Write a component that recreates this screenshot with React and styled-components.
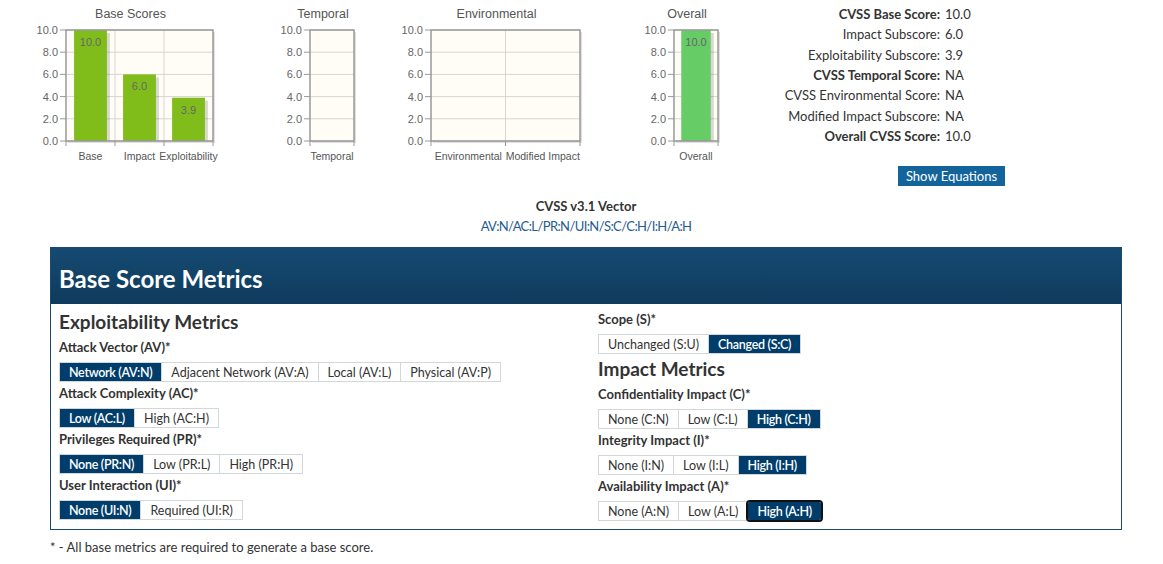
import React from "react";
import styled, { createGlobalStyle } from "styled-components";

const GlobalStyle = createGlobalStyle`
  body {
    margin: 0;
    background: #fff;
    color: #333;
    font-family: "Lato", "Liberation Sans", sans-serif;
    font-size: 13px;
  }
`;

const Page = styled.div`
  width: 1163px;
`;

const TopRow = styled.div`
  display: flex;
  padding-left: 30px;
  height: 196px;
`;

const ChartCell = styled.div`
  width: ${(p) => p.$w}px;
  flex: none;
`;

const ScoreBox = styled.div`
  width: 260px;
  padding-top: 4px;
`;

const ScoreGrid = styled.div`
  display: grid;
  grid-template-columns: 180px auto;
  column-gap: 5px;
  line-height: 20.33px;
`;

const ScoreLabel = styled.div`
  text-align: right;
  font-weight: ${(p) => (p.$bold ? 700 : 400)};
`;

const ShowButton = styled.button`
  margin: 20px 0 0 138px;
  width: 107px;
  height: 20px;
  padding: 0;
  border: none;
  background: #14649c;
  color: #fff;
  font-family: inherit;
  font-size: 13px;
`;

const VectorBlock = styled.div`
  margin-left: 50px;
  width: 1072px;
  text-align: center;
  line-height: 20px;
`;

const VectorTitle = styled.div`
  font-weight: 700;
`;

const VectorLink = styled.a`
  color: #1f5b8f;
  text-decoration: none;
  letter-spacing: -0.6px;
`;

const Panel = styled.section`
  margin: 11px 0 0 50px;
  width: 1072px;
  box-sizing: border-box;
  border: 1px solid #1b4a6e;
`;

const PanelHeader = styled.div`
  height: 56px;
  display: flex;
  align-items: center;
  padding-left: 8px;
  background: linear-gradient(#164a72, #0e3b5d);
`;

const PanelTitle = styled.h2`
  margin: 0;
  padding-top: 5px;
  color: #fff;
  font-size: 24px;
  font-weight: 700;
`;

const PanelBody = styled.div`
  display: grid;
  grid-template-columns: 539px 1fr;
  padding: 5px 8px 7px;
`;

const Column = styled.div`
  display: flex;
  flex-direction: column;
`;

const GroupTitle = styled.h3`
  margin: ${(p) => (p.$first ? "1px" : "2px")} 0 3px;
  font-size: 19px;
  line-height: 24px;
  font-weight: 700;
`;

const MetricLabel = styled.div`
  font-weight: 700;
  line-height: 20px;
  margin-bottom: 5px;
`;

const ButtonRow = styled.div`
  display: flex;
  margin-bottom: 1px;
`;

const OptionButton = styled.button`
  height: 20px;
  padding: 0 9px;
  margin-left: -1px;
  border: 1px solid #d2d7da;
  background: ${(p) => (p.$on ? "#003d6a" : "#fff")};
  color: ${(p) => (p.$on ? "#fff" : "#333")};
  font-family: inherit;
  font-size: 12.5px;
  font-weight: ${(p) => (p.$on ? 600 : 400)};
  letter-spacing: ${(p) => (p.$on ? "-0.3px" : "0")};
  white-space: nowrap;
  outline: ${(p) => (p.$focus ? "2px solid #111" : "none")};
  outline-offset: -1px;
  border-radius: ${(p) => (p.$focus ? "3px" : "0")};

  &:first-child {
    margin-left: 0;
  }
`;

const Footnote = styled.p`
  margin: 7px 0 0 50px;
  line-height: 20px;
`;

const TOP = 30;
const PLOT_H = 111;
const LEFT = 36;

// jqplot-like bar chart: fixed 0-10 scale, one column per category
function Chart({ title, plotW, cats, values = [], color }) {
  const w = LEFT + plotW + 14;
  const catW = plotW / cats.length;
  const barW = catW * 0.67;
  const y = (v) => TOP + PLOT_H * (1 - v / 10);
  const ticks = [0, 2, 4, 6, 8, 10];
  return (
    <svg width={w} height={170} fontFamily="'Liberation Sans', sans-serif">
      <text x={w / 2 + 2} y={18} fontSize="12.5" fill="#555" textAnchor="middle">
        {title}
      </text>
      <rect x={LEFT + 2} y={TOP + 2} width={plotW} height={PLOT_H} fill="#000" opacity="0.12" />
      <rect x={LEFT} y={TOP} width={plotW} height={PLOT_H} fill="#fffdf6" />
      {ticks.map((t) => (
        <g key={t}>
          <line x1={LEFT} x2={LEFT + plotW} y1={y(t)} y2={y(t)} stroke="#d6d6d6" />
          <line x1={LEFT - 6} x2={LEFT} y1={y(t)} y2={y(t)} stroke="#999" />
          <text x={LEFT - 8} y={y(t) + 4} fontSize="11" fill="#666" textAnchor="end">
            {t.toFixed(1)}
          </text>
        </g>
      ))}
      {cats.map((c, i) => (
        <g key={c}>
          {i > 0 && (
            <line x1={LEFT + catW * i} x2={LEFT + catW * i} y1={TOP} y2={TOP + PLOT_H} stroke="#d6d6d6" />
          )}
          <line x1={LEFT + catW * i} x2={LEFT + catW * i} y1={TOP + PLOT_H} y2={TOP + PLOT_H + 5} stroke="#999" />
          <text x={LEFT + catW * (i + 0.5)} y={TOP + PLOT_H + 19} fontSize="10.5" fill="#555" textAnchor="middle">
            {c}
          </text>
        </g>
      ))}
      <line x1={LEFT + plotW} x2={LEFT + plotW} y1={TOP + PLOT_H} y2={TOP + PLOT_H + 5} stroke="#999" />
      {values.map((v, i) => {
        const bx = LEFT + catW * (i + 0.5) - barW / 2;
        return (
          <g key={i}>
            <rect x={bx + 3} y={y(v) + 3} width={barW} height={TOP + PLOT_H - y(v) - 3} fill="#000" opacity="0.15" />
            <rect x={bx} y={y(v)} width={barW} height={TOP + PLOT_H - y(v)} fill={color} />
            <text x={bx + barW / 2} y={y(v) + 16} fontSize="11" fill="#666" textAnchor="middle">
              {v.toFixed(1)}
            </text>
          </g>
        );
      })}
      <rect x={LEFT} y={TOP} width={plotW} height={PLOT_H} fill="none" stroke="#999" strokeWidth="1.5" />
    </svg>
  );
}

const scores = [
  ["CVSS Base Score:", "10.0", true],
  ["Impact Subscore:", "6.0"],
  ["Exploitability Subscore:", "3.9"],
  ["CVSS Temporal Score:", "NA", true],
  ["CVSS Environmental Score:", "NA"],
  ["Modified Impact Subscore:", "NA"],
  ["Overall CVSS Score:", "10.0", true],
];

const leftMetrics = [
  ["Attack Vector (AV)*", ["Network (AV:N)", "Adjacent Network (AV:A)", "Local (AV:L)", "Physical (AV:P)"], 0],
  ["Attack Complexity (AC)*", ["Low (AC:L)", "High (AC:H)"], 0],
  ["Privileges Required (PR)*", ["None (PR:N)", "Low (PR:L)", "High (PR:H)"], 0],
  ["User Interaction (UI)*", ["None (UI:N)", "Required (UI:R)"], 0],
];

const impactMetrics = [
  ["Confidentiality Impact (C)*", ["None (C:N)", "Low (C:L)", "High (C:H)"], 2],
  ["Integrity Impact (I)*", ["None (I:N)", "Low (I:L)", "High (I:H)"], 2],
  ["Availability Impact (A)*", ["None (A:N)", "Low (A:L)", "High (A:H)"], 2, true],
];

function Metric({ label, options, selected, focus }) {
  return (
    <>
      <MetricLabel>{label}</MetricLabel>
      <ButtonRow>
        {options.map((o, i) => (
          <OptionButton key={o} $on={i === selected} $focus={focus && i === selected}>
            {o}
          </OptionButton>
        ))}
      </ButtonRow>
    </>
  );
}

export default function App() {
  return (
    <Page>
      <GlobalStyle />
      <TopRow>
        <ChartCell $w={244}>
          <Chart title="Base Scores" plotW={147} cats={["Base", "Impact", "Exploitability"]} values={[10, 6, 3.9]} color="#80bd1b" />
        </ChartCell>
        <ChartCell $w={121}>
          <Chart title="Temporal" plotW={44} cats={["Temporal"]} />
        </ChartCell>
        <ChartCell $w={243}>
          <Chart title="Environmental" plotW={149} cats={["Environmental", "Modified Impact"]} />
        </ChartCell>
        <ChartCell $w={122}>
          <Chart title="Overall" plotW={44} cats={["Overall"]} values={[10]} color="#66cc66" />
        </ChartCell>
        <ScoreBox>
          <ScoreGrid>
            {scores.map(([l, v, b]) => (
              <React.Fragment key={l}>
                <ScoreLabel $bold={b}>{l}</ScoreLabel>
                <div>{v}</div>
              </React.Fragment>
            ))}
          </ScoreGrid>
          <ShowButton>Show Equations</ShowButton>
        </ScoreBox>
      </TopRow>
      <VectorBlock>
        <VectorTitle>CVSS v3.1 Vector</VectorTitle>
        <VectorLink href="#">AV:N/AC:L/PR:N/UI:N/S:C/C:H/I:H/A:H</VectorLink>
      </VectorBlock>
      <Panel>
        <PanelHeader>
          <PanelTitle>Base Score Metrics</PanelTitle>
        </PanelHeader>
        <PanelBody>
          <Column>
            <GroupTitle $first>Exploitability Metrics</GroupTitle>
            {leftMetrics.map(([l, o, s]) => (
              <Metric key={l} label={l} options={o} selected={s} />
            ))}
          </Column>
          <Column>
            <Metric label="Scope (S)*" options={["Unchanged (S:U)", "Changed (S:C)"]} selected={1} />
            <GroupTitle>Impact Metrics</GroupTitle>
            {impactMetrics.map(([l, o, s, f]) => (
              <Metric key={l} label={l} options={o} selected={s} focus={f} />
            ))}
          </Column>
        </PanelBody>
      </Panel>
      <Footnote>* - All base metrics are required to generate a base score.</Footnote>
    </Page>
  );
}
